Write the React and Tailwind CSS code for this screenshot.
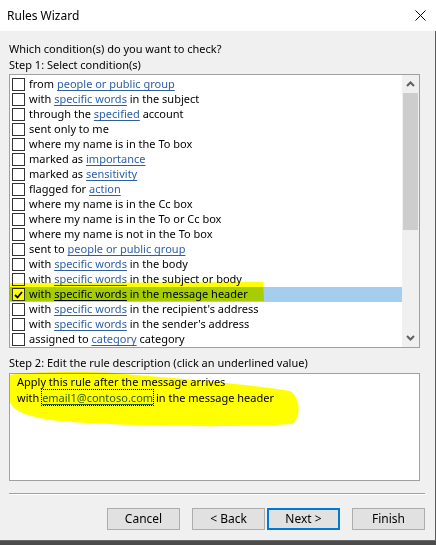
import React from 'react';

const conditions = [
  'from [people or public group]',
  'with [specific words] in the subject',
  'through the [specified] account',
  'sent only to me',
  'where my name is in the To box',
  'marked as [importance]',
  'marked as [sensitivity]',
  'flagged for [action]',
  'where my name is in the Cc box',
  'where my name is in the To or Cc box',
  'where my name is not in the To box',
  'sent to [people or public group]',
  'with [specific words] in the body',
  'with [specific words] in the subject or body',
  'with [specific words] in the message header',
  "with [specific words] in the recipient's address",
  "with [specific words] in the sender's address",
  'assigned to [category] category',
];

const SELECTED = 14;

const Label = ({ text, selected }) => {
  const parts = text.split(/(\[[^\]]+\])/).filter(Boolean);
  return (
    <span className="whitespace-pre">
      {parts.map((p, i) =>
        p.startsWith('[') ? (
          <span key={i} className={`underline underline-offset-2 ${selected ? 'text-black' : 'text-[#2c5fa6]'}`}>
            {p.slice(1, -1)}
          </span>
        ) : (
          <span key={i}>{p}</span>
        )
      )}
    </span>
  );
};

const Checkbox = ({ checked }) => (
  <div className="w-[13px] h-[13px] border border-[#333] bg-white flex items-center justify-center shrink-0">
    {checked && (
      <svg width="9" height="8" viewBox="0 0 9 8">
        <path d="M1 4 L3.5 6.5 L8 1" fill="none" stroke="#000" strokeWidth="1.8" />
      </svg>
    )}
  </div>
);

const Chevron = ({ down }) => (
  <svg width="9" height="6" viewBox="0 0 9 6">
    <path d={down ? 'M1 1 L4.5 4.5 L8 1' : 'M1 5 L4.5 1.5 L8 5'} fill="none" stroke="#606060" strokeWidth="2" />
  </svg>
);

const Button = ({ children, focused }) => (
  <button
    className={`w-[73px] h-[22px] bg-[#e1e1e1] text-[12px] text-black flex items-center justify-center ${
      focused ? 'border-2 border-[#0078d7]' : 'border border-[#adadad]'
    }`}
  >
    {children}
  </button>
);

export default function App() {
  return (
    <div className="relative w-[436px] h-[545px] overflow-hidden font-['Noto_Sans',sans-serif] text-[11px] text-black bg-[#f0f0f0]">
      {/* Title bar */}
      <div className="h-[31px] bg-white flex items-center justify-between pl-[7px] pr-[10px]">
        <span className="text-[12px]">Rules Wizard</span>
        <svg width="11" height="11" viewBox="0 0 11 11">
          <path d="M0.5 0.5 L10.5 10.5 M10.5 0.5 L0.5 10.5" stroke="#000" strokeWidth="1" />
        </svg>
      </div>

      {/* Body */}
      <div className="h-[509px] border-r border-[#5a5a5a] pl-[9px] pr-[10px] pt-[10px] flex flex-col">
        <div className="leading-[16px]">Which condition(s) do you want to check?</div>
        <div className="leading-[16px]">Step 1: Select condition(s)</div>

        {/* Condition list */}
        <div className="mt-[1px] w-[411px] h-[274px] border border-[#a0a0a0] bg-white flex">
          <div className="flex-1 pt-[2px]">
            {conditions.map((c, i) => (
              <div
                key={i}
                className={`h-[15px] flex items-center pl-[2px] gap-[4px] ${i === SELECTED ? 'bg-[#a5cdee]' : ''}`}
              >
                <Checkbox checked={i === SELECTED} />
                <Label text={c} selected={i === SELECTED} />
              </div>
            ))}
          </div>
          <div className="w-[17px] bg-[#f0f0f0] flex flex-col">
            <div className="h-[18px] flex items-center justify-center">
              <Chevron />
            </div>
            <div className="h-[137px] w-[15px] ml-[1px] bg-[#cdcdcd]" />
            <div className="flex-1" />
            <div className="h-[18px] flex items-center justify-center">
              <Chevron down />
            </div>
          </div>
        </div>

        <div className="mt-[7px] leading-[16px]">Step 2: Edit the rule description (click an underlined value)</div>

        {/* Description */}
        <div className="mt-[2px] w-[411px] h-[108px] border border-[#a0a0a0] bg-white px-[7px] leading-[16px]">
          <div>Apply this rule after the message arrives</div>
          <div className="whitespace-pre">
            with <span className="text-[#2c5fa6] underline underline-offset-2 outline-1 outline-dotted outline-black">email1@contoso.com</span> in the message header
          </div>
        </div>

        <div className="mt-[12px] h-[2px] border-t border-[#a0a0a0] border-b border-b-white" />

        <div className="mt-[13px] flex justify-end">
          <Button>Cancel</Button>
          <div className="w-[12px]" />
          <Button>&lt; Back</Button>
          <div className="w-[2px]" />
          <Button focused>Next &gt;</Button>
          <div className="w-[12px]" />
          <Button>Finish</Button>
        </div>
      </div>

      <div className="h-[5px] bg-[#4b4b4b] border-t border-[#6a6a6a]" />

      {/* Highlighter strokes */}
      <svg className="absolute left-0 top-0 pointer-events-none mix-blend-multiply" width="436" height="545">
        <path d="M10 283 L263 282 L264 301 L10 301 Z" fill="#ffff00" />
        <path
          d="M10 375 C20 372 90 371 113 373 C170 378 250 384 290 391 C300 396 302 418 292 424 C230 428 120 426 60 421 C30 418 12 411 10 402 Z"
          fill="#ffff00"
        />
      </svg>
    </div>
  );
}
